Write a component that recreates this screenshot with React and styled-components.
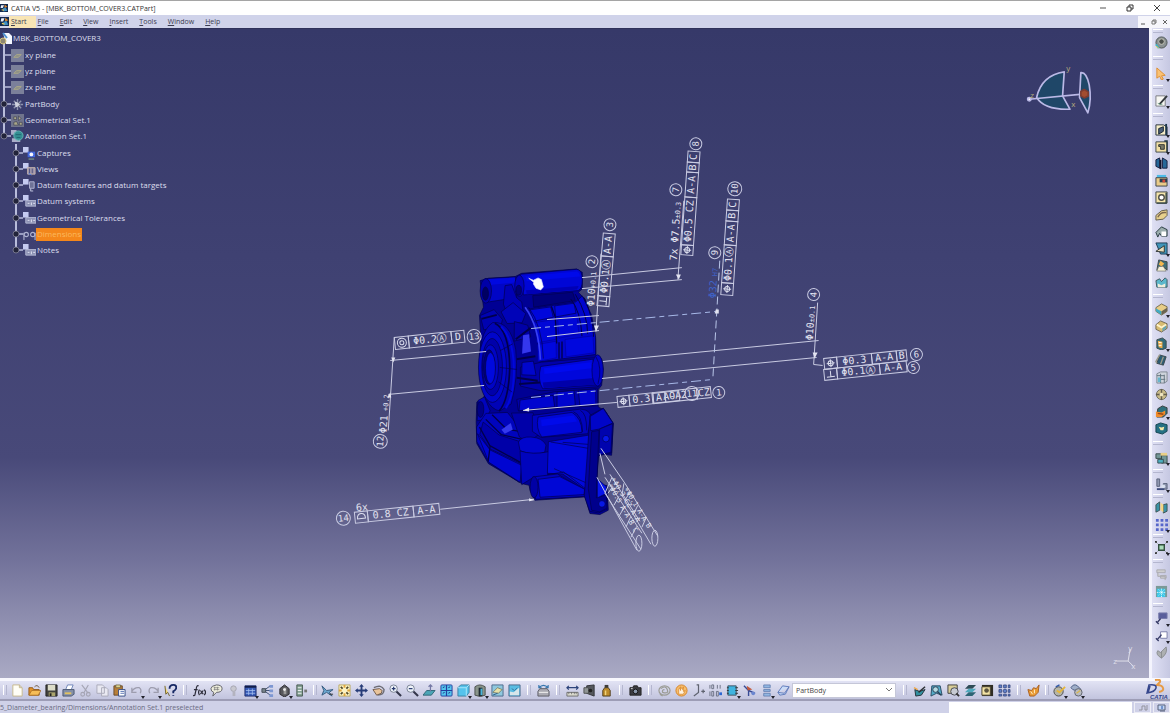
/** @format */

import React, {useState} from 'react'
import styled, {createGlobalStyle} from 'styled-components'

// 14x14 glyphs shared by both toolbars and the tree
const icons = {
  app: (
    <>
      <rect width="14" height="14" fill="#13294d" />
      <path d="M2 2h5l-2 5H1z" fill="#e8eef8" />
      <path d="M8 1l5 4-5 2z" fill="#e58a2c" />
      <path d="M5 8l5-2 3 6-7 1z" fill="#3e8fc4" />
      <path d="M3 10l4 1" stroke="#f4d35a" strokeWidth="2" />
    </>
  ),
  newFile: <path d="M2 1h7l3 3v9H2z M9 1v3h3" fill="#fffef6" stroke="#c7b98a" />,
  open: (
    <>
      <path d="M1 12V4h4l1 2h6v6z" fill="#e4932a" stroke="#8f5717" />
      <path d="M1 12l3-5h10l-3 5z" fill="#f6bd57" stroke="#9c6420" strokeWidth=".7" />
      <path d="M7 3q3-3 5 1" fill="none" stroke="#725c40" />
    </>
  ),
  save: (
    <>
      <path d="M1 1h12v12H1z" fill="#42423e" stroke="#222" />
      <path d="M3 1h8v6H3z" fill="#dcdcc9" />
      <path d="M4 9h7v4H4z" fill="#aaa46c" />
      <path d="M5 10h2v3H5z" fill="#222" />
    </>
  ),
  print: (
    <>
      <path d="M4 6l2-5h6l-2 5z" fill="#fff" stroke="#6b83b8" />
      <path d="M1 6h12v5l-3 2H1z" fill="#8490a8" stroke="#4a5570" />
      <path d="M3 10h7" stroke="#e3c260" strokeWidth="2" />
    </>
  ),
  cut: (
    <g fill="none" stroke="#a5a5b4" strokeWidth="1.2">
      <path d="M3 1l7 9M10 1L5 10" />
      <circle cx="4" cy="11" r="2" />
      <circle cx="10" cy="11" r="2" />
    </g>
  ),
  copy: <path d="M1 1h6l2 2v7H1zM6 4h5l2 2v7H6z" fill="#e9e9f2" stroke="#a9a9b8" />,
  paste: (
    <>
      <path d="M1 2h9v10H1z" fill="#b87f38" stroke="#68492b" />
      <path d="M3 1h5v3H3z" fill="#ddd28f" stroke="#5b5134" strokeWidth=".7" />
      <path d="M6 6h7v7H6z" fill="#fff" stroke="#334b85" />
      <path d="M8 8h4M8 10h4" stroke="#5470b2" />
    </>
  ),
  undo: <path d="M2 4v5h5M2 8q3-5 8-4 3 2 1 6" fill="none" stroke="#9d9dae" strokeWidth="1.4" />,
  redo: <path d="M12 4v5H7M12 8Q9 3 4 4q-3 2-1 6" fill="none" stroke="#9d9dae" strokeWidth="1.4" />,
  help: (
    <>
      <path d="M1 2l1 9 2-2 2 4" fill="#f3d873" stroke="#6b5e2a" />
      <path d="M6 5q0-4 4-4t3 4q-1 2-3 3v2M10 12v1" fill="none" stroke="#172964" strokeWidth="2" />
    </>
  ),
  formula: (
    <g fill="none" stroke="#2b2b38" strokeWidth="1.3">
      <path d="M6 2Q4 1 3.500 5L2 12q-1 1-2 0M1 6h4M7 6q-2 3 0 6M12 6q3 3 0 6M8 7l3 4M11 7l-3 4" />
    </g>
  ),
  comment: (
    <>
      <path d="M7 1q6 0 6 4t-6 4l-4 4 1-4Q1 8 1 5t6-4z" fill="#eeeedd" stroke="#5e5e66" />
      <path d="M5 3v4M8 3v4M4 4h6M4 6h6" stroke="#777" strokeWidth=".7" />
    </>
  ),
  lamp: (
    <>
      <circle cx="7" cy="5" r="3" fill="#c8c8cf" stroke="#a4a4b0" />
      <path d="M6 8h3v5H6z" fill="#b3b3bf" />
    </>
  ),
  table: (
    <>
      <path d="M1 2h12v11H1z" fill="#375bb7" stroke="#1f2e6e" />
      <path d="M1 3h12" stroke="#121d49" strokeWidth="2" />
      <path d="M2 7h10M2 10h10M5 5v7M9 5v7" stroke="#a9c4f2" strokeWidth=".8" />
    </>
  ),
  graph: (
    <>
      <path d="M3 7l7-5M3 7h7M3 7l7 5" stroke="#394b6e" />
      <path d="M1 5h4v4H1z" fill="#78848c" stroke="#434c55" />
      <path d="M9 1h4v3H9zM9 6h4v3H9zM9 11h4v3H9z" fill="#7d97d2" />
    </>
  ),
  lock: (
    <>
      <path d="M2 5l5-4 5 4v6l-5 3-5-3z" fill="#57575c" stroke="#29292d" />
      <path d="M6 4h3v7H6z" fill="#999" />
      <circle cx="7" cy="6" r="1.500" fill="#eee" />
    </>
  ),
  rules: (
    <>
      <path d="M2 1h6v12H2z" fill="#86a496" stroke="#45564f" />
      <path d="M3 4h4M3 7h4M3 10h4" stroke="#f3f3f3" />
      <path d="M10 6h3v3h-3z" fill="#777" />
    </>
  ),
  fly: (
    <>
      <path d="M1 2l5 5 7-1-4 3 3 4-6-4-5 3 2-5z" fill="#6ba7cf" stroke="#35597c" />
      <path d="M9 11h4" stroke="#333" />
    </>
  ),
  fitAll: (
    <>
      <path d="M1 1h12v12H1z" fill="#fbf3c4" stroke="#b9a862" />
      <path d="M3 3l2 2M11 3L9 5M3 11l2-2M11 11L9 9" stroke="#4c4526" strokeWidth="1.800" />
      <path d="M7 1v3M7 10v3M1 7h3M10 7h3" stroke="#e0a63c" strokeWidth="2" />
    </>
  ),
  pan: (
    <>
      <path d="M7 2v10M2 7h10" stroke="#273c78" strokeWidth="2" />
      <path d="M7 0l2.500 3h-5zM7 14l2.500-3h-5zM0 7l3-2.500v5zM14 7l-3-2.500v5z" fill="#273c78" />
    </>
  ),
  rotate: (
    <>
      <path d="M2 4q8-4 11 2 0 6-7 6" fill="none" stroke="#6c6c75" strokeWidth="1.500" />
      <path d="M1 6l7-1 3 2-1 3-5 2z" fill="#e9c49b" stroke="#6f5846" />
    </>
  ),
  zoomIn: (
    <>
      <circle cx="5" cy="5" r="4" fill="#eef3fa" stroke="#777f91" />
      <path d="M3 5h4M5 3v4" stroke="#26386e" strokeWidth="1.300" />
      <path d="M8 8l5 5" stroke="#33364a" strokeWidth="2.200" />
    </>
  ),
  zoomOut: (
    <>
      <circle cx="5" cy="5" r="4" fill="#eef3fa" stroke="#777f91" />
      <path d="M3 5h4" stroke="#26386e" strokeWidth="1.300" />
      <path d="M8 8l5 5" stroke="#33364a" strokeWidth="2.200" />
    </>
  ),
  normal: (
    <>
      <path d="M4 7h9l-4 5H0z" fill="#4ba5b6" stroke="#2f6675" />
      <path d="M8 8V1M6 3l2-2 2 2" fill="none" stroke="#7478a4" strokeWidth="1.300" />
    </>
  ),
  multi: (
    <>
      <rect x="1" y="1" width="12" height="12" rx="1" fill="#54c6ee" stroke="#233f9e" />
      <path d="M7 1v12M1 7h12" stroke="#233f9e" strokeWidth="1.300" />
      <path d="M3 4l2-1M9 4l2-1M3 10l2-1M9 10l2-1" stroke="#1b2e82" />
    </>
  ),
  cube: (
    <>
      <path d="M1 4l3-3h9v8l-3 4H1z" fill="#55c3ec" stroke="#3b7ea0" />
      <path d="M1 4h9v9M10 4l3-3" fill="none" stroke="#a9e6fa" />
    </>
  ),
  shading: (
    <>
      <path d="M1 3q5-4 11 0v9q-5 3-11 0z" fill="#89948a" stroke="#4a4e4c" />
      <path d="M5 4h4v9H5z" fill="#1f2b33" />
      <path d="M7 5h2v7H7z" fill="#49b4d8" />
    </>
  ),
  hide: (
    <>
      <path d="M1 1h12v12H1z" fill="#8fc8de" stroke="#4e6a8a" />
      <path d="M2 9l5-5 5 2-4 4z" fill="#e6e1aa" stroke="#66644a" strokeWidth=".7" />
      <path d="M2 12l5-2" stroke="#295886" />
    </>
  ),
  swap: (
    <>
      <path d="M1 1h12v12H1z" fill="#58bce2" stroke="#4e6a8a" />
      <path d="M2 12V8l4 1 6-5v8z" fill="#d7e6ea" />
      <path d="M4 5l3 2 3-3" fill="none" stroke="#3777a0" />
    </>
  ),
  printer: (
    <>
      <path d="M2 4q5-5 10 0M2 1v3h3M12 1v3H9" fill="none" stroke="#3575ad" strokeWidth="1.200" />
      <path d="M1 8l2-3h8l2 3v5H1z" fill="#aaaab2" stroke="#5a5a62" />
      <path d="M2 9h10" stroke="#f5f5f5" />
    </>
  ),
  measure: (
    <>
      <path d="M1 4h12M3 2L1 4l2 2M11 2l2 2-2 2" fill="none" stroke="#2c437a" strokeWidth="1.300" />
      <path d="M1 9h12v4H1z" fill="#dcdcd0" stroke="#6b6b6b" />
      <path d="M3 9v2M6 9v2M9 9v2M11 9v2" stroke="#555" strokeWidth=".7" />
    </>
  ),
  item: (
    <>
      <path d="M4 2l8-1v12l-8-3z" fill="#55585c" stroke="#303236" />
      <path d="M1 4h5v6H1z" fill="#8f9494" stroke="#4d5050" />
      <circle cx="8" cy="7" r="2" fill="#222" />
    </>
  ),
  inertia: (
    <>
      <path d="M5 4h4l2 3v6H3V7z" fill="#bc8b2b" stroke="#4d3c1c" />
      <path d="M5 1h4v3H5z" fill="#3e3b35" />
      <path d="M6 7v5" stroke="#f0d27a" strokeWidth="1.500" />
    </>
  ),
  camera: (
    <>
      <path d="M1 4h3l1-2h4l1 2h3v8H1z" fill="#3b3b40" stroke="#222" />
      <circle cx="7" cy="8" r="2.500" fill="#8b98ac" stroke="#111" />
      <path d="M2 5h2" stroke="#ddd" />
    </>
  ),
  spiral: (
    <g fill="none" stroke="#9b9c95" strokeWidth="1.300">
      <ellipse cx="7" cy="7" rx="6" ry="5" />
      <path d="M3 5q5-4 7 1t-5 3q-1-3 2-3M2 11l3 2" />
    </g>
  ),
  hand: (
    <>
      <circle cx="7" cy="7" r="6" fill="#f6bd6c" stroke="#d58224" />
      <path d="M4 11V6l1-2 1 3V3l2 3 1-3v5l2-1-2 4z" fill="#fff3df" stroke="#d47b18" strokeWidth=".7" />
    </>
  ),
  axis: (
    <>
      <path d="M5 1h2v8l-5 4M10 8h4M12 6v4" fill="none" stroke="#5f6370" strokeWidth="1.300" />
    </>
  ),
  numbers: (
    <>
      <path d="M1 1v4M3 1h2v4H3zM9 1v4M12 1v4M1 8v5M3 8h2v5H3zM8 8h2v5H8z" fill="none" stroke="#6a6f82" />
      <path d="M11 9h3v3h-3z" fill="#2c67d2" />
    </>
  ),
  block: (
    <>
      <path d="M2 2h9v10H2z" fill="#3fb3df" stroke="#3d5162" />
      <path d="M1 4h2M1 7h2M1 10h2M10 4h3M10 7h3M10 10h3" stroke="#333" />
    </>
  ),
  constraint: (
    <>
      <path d="M1 2l5 5M6 7v6M6 7l7 3" stroke="#374b96" strokeWidth="1.500" />
      <path d="M4 2l6 4-5 1z" fill="#c2583b" />
      <circle cx="11" cy="10" r="2" fill="#6b87d0" />
    </>
  ),
  stack: <path d="M4 1h7v3H4zM4 6h7v2H4zM4 10h7v3H4z" fill="#92b7e2" stroke="#5b77ab" strokeWidth=".8" />,
  eraser: <path d="M1 9l5-7 7 1-4 8-6 1zM1 9l7 1 5-7" fill="#c9dcf8" stroke="#5d78b9" />,
  sketch1: (
    <>
      <path d="M2 6l5 2 6-2-4 6-6 1z" fill="#3390a0" stroke="#222e36" />
      <path d="M13 3L6 9" stroke="#2d3033" strokeWidth="1.500" />
      <path d="M1 4l4 2" stroke="#f0a849" strokeWidth="1.500" />
    </>
  ),
  sketch2: (
    <>
      <path d="M2 2h9l2 10-6-2-6 3z" fill="#53aac6" stroke="#284860" />
      <circle cx="6" cy="6" r="3" fill="#b5dae1" stroke="#2b3f55" />
      <path d="M8 8l4 4" stroke="#2b3f55" strokeWidth="1.500" />
    </>
  ),
  sketch3: (
    <>
      <path d="M1 1h10v9H1z" fill="#d8cd98" stroke="#3c3c3c" />
      <circle cx="8" cy="8" r="4" fill="#c7cbd3" stroke="#44464f" />
      <path d="M10 10l3 3" stroke="#333" strokeWidth="2" />
    </>
  ),
  layers: (
    <>
      <path d="M5 1h8l-4 4H1z" fill="#2f4c57" />
      <path d="M5 5h8l-4 4H1z" fill="#4fa9bd" />
      <path d="M5 9h8l-4 4H1z" fill="#2c6474" />
    </>
  ),
  pocket: (
    <>
      <path d="M1 1h12v12H1z" fill="#2f2c24" />
      <path d="M1 3h9v9H1z" fill="#f3e3a4" stroke="#4a4431" />
      <circle cx="6" cy="7" r="2.500" fill="#5d5640" />
    </>
  ),
  pattern: (
    <g fill="#5f80c9" stroke="#27356c" strokeWidth=".7">
      <path d="M1 1h3v3H1zM6 1h3v3H6zM11 1h2v3h-2zM1 6h3v3H1zM11 6h2v3h-2zM1 11h3v2H1zM6 11h3v2H6zM11 11h2v2h-2z" />
      <circle cx="7.500" cy="7.500" r="2" />
    </g>
  ),
  tools: (
    <>
      <path d="M1 6l4 1 2-3 3 1 3-4-1 8-4 4H3z" fill="#e99b35" stroke="#a75d1c" />
      <path d="M4 8l2 3M8 6v4" stroke="#fff1ce" />
    </>
  ),
  wrench: (
    <>
      <circle cx="6" cy="8" r="5" fill="#b5b5a8" stroke="#4b4b4b" />
      <path d="M13 3L7 9l-3-2" fill="none" stroke="#e6b63c" strokeWidth="2" />
      <path d="M3 3l4-2" stroke="#2e57a8" strokeWidth="1.500" />
    </>
  ),
  views: (
    <>
      <path d="M1 4q3-5 7-2l3 3-2 3-6-2z" fill="#9faec8" stroke="#4b5c82" />
      <circle cx="9" cy="9" r="4" fill="#b9bcc4" stroke="#5d6068" />
      <path d="M7 10l4-3" stroke="#d9b650" strokeWidth="1.500" />
    </>
  ),
  gear: (
    <>
      <circle cx="7" cy="7" r="6" fill="#8a9192" stroke="#4c5352" />
      <circle cx="7" cy="6" r="3" fill="#4b504d" stroke="#c9c9bb" />
      <path d="M1 9l3 4" stroke="#42b4c9" strokeWidth="2" />
      <path d="M1 11l3 2" stroke="#eecb47" />
    </>
  ),
  select: <path d="M2 1l9 8-4 .5L9 13l-2 1-2-4-3 2z" fill="#fac274" stroke="#dd8e31" />,
  sketcher: (
    <>
      <path d="M1 2h10v11H1z" fill="#f7f7f3" stroke="#77797e" />
      <path d="M13 2L5 11" stroke="#33383d" strokeWidth="2" />
      <path d="M3 10q2 2 5 1" fill="none" stroke="#679a80" />
    </>
  ),
  pad: (
    <>
      <path d="M1 2h8l4 2v9H1z" fill="#f5edc8" stroke="#23303d" />
      <path d="M11 1h2v12h-2z" fill="#193348" />
      <path d="M4 6l5-2v5l-5 3z" fill="#4a5e7a" stroke="#14222e" />
    </>
  ),
  pocket2: (
    <>
      <path d="M1 2h12v11H1z" fill="#f2e0a5" stroke="#3d4548" />
      <path d="M4 5h6v5H6v-3H4z" fill="#7a7b68" stroke="#30332f" />
      <path d="M10 1h3v12" fill="none" stroke="#22363f" strokeWidth="1.500" />
    </>
  ),
  shaft: (
    <>
      <path d="M1 3l4-2v11l-4-2zM8 1l5 3v8H8z" fill="#256798" stroke="#161c3e" />
      <path d="M6 3v10" stroke="#10122c" strokeWidth="2" />
    </>
  ),
  groove: (
    <>
      <path d="M2 1h10v3H2z" fill="#4dbbe7" />
      <path d="M1 4h12v9H1z" fill="#e9cb89" stroke="#3a4248" />
      <path d="M5 5h8v4H5z" fill="#253e52" />
      <path d="M8 6h3v3H8z" fill="#cd4838" />
    </>
  ),
  hole: (
    <>
      <path d="M1 1h12v12H1z" fill="#f4e5ab" stroke="#3b4242" />
      <circle cx="7" cy="7" r="3" fill="#fff" stroke="#4e4e45" strokeWidth="1.500" />
      <path d="M12 2v11H2" fill="none" stroke="#2f4242" strokeWidth="1.500" />
    </>
  ),
  rib: (
    <>
      <path d="M1 8l6-5 6-1v6l-4 4-8 1z" fill="#e7d08d" stroke="#5f5a49" />
      <path d="M3 10q3-6 9-5" fill="none" stroke="#7d6950" strokeWidth="1.500" />
    </>
  ),
  slot: (
    <>
      <path d="M1 8l6-6 6 3v7H7L5 9l-2 4z" fill="#9badad" stroke="#23353c" />
      <path d="M7 7h5v5H7z" fill="#fff" />
    </>
  ),
  stiffener: (
    <>
      <path d="M1 1h12v12H6z" fill="#3f94b8" stroke="#1d3851" />
      <path d="M1 10l9-6v7z" fill="#e7ddbb" stroke="#2c312e" />
    </>
  ),
  loft: (
    <>
      <path d="M4 1l9 2v9l-5-5-6 5z" fill="#3e6f78" stroke="#3d4446" />
      <path d="M6 2l4 3-3 3-3-2z" fill="#f4b64f" />
      <path d="M2 13l2-5h5l3 5z" fill="#f3eed9" stroke="#6b6d66" strokeWidth=".7" />
    </>
  ),
  loft2: (
    <>
      <path d="M1 5l4-2 2 3 4-4 2 2v8H2z" fill="#5bb7cb" stroke="#3c555c" />
      <path d="M3 8l4 2 4-2v4H3z" fill="#f0ecd9" />
    </>
  ),
  fillet: (
    <>
      <path d="M1 5l6-4 6 3v5l-6 4-6-4z" fill="#e8cd86" stroke="#766a49" />
      <path d="M1 6l6 3v4l-6-4z" fill="#3faac4" />
      <path d="M7 9l6-4v4l-6 4z" fill="#696352" />
    </>
  ),
  chamfer: (
    <>
      <path d="M1 5l5-4 7 3v5l-6 4-6-3z" fill="#d8bc72" stroke="#6c6551" />
      <path d="M2 5l5 3 5-3" fill="none" stroke="#fff3ca" strokeWidth="2" />
      <path d="M8 9l4-3v3l-4 3z" fill="#65a6b5" />
    </>
  ),
  draft: (
    <>
      <path d="M2 3l6-2 4 3v8l-5 2-5-2z" fill="#346c7a" stroke="#3a494c" />
      <path d="M3 4l5 1v7l-4-1z" fill="#f2b04c" />
      <path d="M4 6h3M4 9h3" stroke="#fff" />
    </>
  ),
  shell: (
    <>
      <path d="M5 1l7 2-3 9-7-2z" fill="#2d5d73" stroke="#39454c" />
      <path d="M5 1l-4 7 1 2M9 3L6 11" fill="none" stroke="#9b998a" strokeWidth="1.500" />
    </>
  ),
  thick: (
    <>
      <path d="M2 3l4-2h7v10l-3 2H2z" fill="#ced4dc" stroke="#7e8791" />
      <path d="M6 3v10M2 5h8M6 9h5M10 4v9" stroke="#61717c" />
      <path d="M3 7h3v5H3z" fill="#67b6cd" />
    </>
  ),
  thread: (
    <>
      <circle cx="7" cy="7" r="5.500" fill="#c9bb88" stroke="#6c6a5b" />
      <path d="M7 1v12M1 7h12" stroke="#645e4d" strokeWidth="1.500" />
      <circle cx="7" cy="7" r="2" fill="#eee4bf" />
    </>
  ),
  face: (
    <>
      <path d="M3 4l5-3 5 2v6l-4 4H2z" fill="#2d6f7c" stroke="#363b3b" />
      <path d="M1 7l6 1 4-2v4l-4 3H1z" fill="#f18c29" />
      <path d="M3 9l6 1" stroke="#9a4616" strokeWidth="1.500" />
    </>
  ),
  replace: (
    <>
      <path d="M1 3l5-2 7 2v7l-5 3-7-2z" fill="#247083" stroke="#15434f" />
      <path d="M4 5l3 1 3-1-1 4H6z" fill="#f4e9a9" />
    </>
  ),
  assemble: (
    <>
      <path d="M1 3h6v5H1zM7 5h6v8H7z" fill="#739797" stroke="#394c4c" />
      <path d="M3 9h6v4H3z" fill="#4baebf" stroke="#364c50" />
      <path d="M6 2h7v3H6z" fill="#e9cf87" />
    </>
  ),
  translate: (
    <>
      <path d="M2 1h3v8H2zM9 6h4v6H9z" fill="#9098b1" stroke="#576079" />
      <path d="M2 12h8" stroke="#3b4979" strokeWidth="2" />
      <circle cx="9" cy="9" r="2" fill="#d9e1ef" />
    </>
  ),
  mirror: (
    <>
      <path d="M1 4l4-3v9l-4 2zM9 4l4-1v8l-4 2z" fill="#3993a7" stroke="#3e5252" />
      <path d="M6 2l3 2v8l-3-2z" fill="#f2d685" />
    </>
  ),
  grid: (
    <g fill="#5666ca">
      <path d="M1 1h3v3H1zM6 1h3v3H6zM11 1h3v3h-3zM1 6h3v3H1zM6 6h3v3H6zM11 6h3v3h-3zM1 11h3v3H1zM6 11h3v3H6zM11 11h3v3h-3z" />
    </g>
  ),
  scale: (
    <>
      <path d="M1 1l12 12M13 1L1 13" stroke="#626b66" strokeDasharray="2 1" />
      <path d="M4 4h6v6H4z" fill="#a9dcb8" stroke="#304d3c" strokeWidth="1.500" />
      <path d="M0 0h2v2H0zM12 0h2v2h-2zM0 12h2v2H0zM12 12h2v2h-2z" fill="#333" />
    </>
  ),
  dim: <path d="M2 2h9v3H2zM3 5v4h8v4M6 8h6v3H6z" fill="#cecece" stroke="#aaaab0" />,
  mesh: (
    <>
      <path d="M1 1h12v12H1z" fill="#7c9997" />
      <path d="M2 4h9v9H2z" fill="#3ec7e7" />
      <path d="M4 5l6 6M10 5l-6 6M7 4v9M2 8h9" stroke="#fff" strokeDasharray="1 1" />
    </>
  ),
  flag: (
    <>
      <path d="M4 1h9v6H4z" fill="#595e9b" stroke="#777bac" />
      <path d="M2 12l4-5M1 10l3 3" stroke="#383c67" strokeWidth="1.500" />
    </>
  ),
  note: (
    <>
      <path d="M6 3h7v7H6z" fill="#fff" stroke="#777ba7" />
      <path d="M2 12l5-6M1 10l3 3" stroke="#383c67" strokeWidth="1.500" />
    </>
  ),
  leaf: <path d="M12 1q2 7-5 12Q0 9 3 5l3 2zM7 13V6" fill="#adb0b1" stroke="#898d90" />,
  plane: (
    <>
      <path d="M0 0h14v14H0z" fill="#7b809a" />
      <path d="M3 9l3-3h5l-3 3z" fill="#8f9189" stroke="#b3af86" strokeWidth=".8" />
    </>
  ),
  body: (
    <>
      <path d="M7 1v12M1 7h12M3 3l8 8M11 3l-8 8" stroke="#8e94b0" strokeWidth="1.500" />
      <path d="M4 4l5 1 1 4-5 1z" fill="#cfd2e0" />
      <path d="M7 4l3 3-3 3" fill="none" stroke="#53566e" />
    </>
  ),
  geoSet: (
    <>
      <path d="M0 0h14v14H0z" fill="#70748c" />
      <path d="M3 3h3v3H3zM8 2l3 3-3 2zM3 9l3-1 2 4H3zM9 9h3v3H9z" fill="#aaa789" stroke="#3b3d52" strokeWidth=".7" />
    </>
  ),
  annotSet: (
    <>
      <path d="M0 0h6v5H0zM1 9h9v4H1z" fill="#a9adc8" />
      <circle cx="8" cy="6" r="5" fill="#348f93" stroke="#66b5b4" />
      <path d="M5 5h6M6 8h4" stroke="#1f656f" />
    </>
  ),
  captures: (
    <>
      <path d="M0 0h6v6H0z" fill="#c5cbf1" />
      <path d="M5 5h8v6H5z" fill="#4267dc" />
      <circle cx="9" cy="8" r="2" fill="#f5f5ff" />
      <path d="M6 13h6" stroke="#8fbb98" />
    </>
  ),
  viewSet: (
    <>
      <path d="M0 0h6v6H0z" fill="#c5cbf1" />
      <path d="M5 5h8v7H5z" fill="#9c93a9" stroke="#c9b4ae" />
      <path d="M7 6v5M10 6v5" stroke="#525480" />
      <path d="M6 11l3 2" stroke="#4e7fe8" />
    </>
  ),
  datum: (
    <>
      <path d="M0 0h6v6H0z" fill="#c5cbf1" />
      <path d="M7 3h5v7H7zM8 10v3h3" fill="#6f7397" stroke="#b2b6d4" />
    </>
  ),
  datumSys: (
    <>
      <path d="M0 0h6v6H0z" fill="#c5cbf1" />
      <path d="M3 6h11v6H3z" fill="#8d92b4" stroke="#b7bbd6" />
      <path d="M5 9h2M9 8v3M11 9h2" stroke="#e6e8f5" />
    </>
  ),
  pq: (
    <g fill="none" stroke="#aeb2d0" strokeWidth="1.200">
      <path d="M1 5v8M13 5v8" />
      <circle cx="3.500" cy="7" r="2.300" />
      <circle cx="10.500" cy="7" r="2.300" />
    </g>
  ),
}

const mainTools = [
  ['newFile', 'open', 'save', 'print', 'cut', 'copy', 'paste', 'undo+', 'redo+', 'help'],
  ['formula', 'comment', 'lamp', 'table+', 'graph', 'lock+', 'rules'],
  ['fly', 'fitAll', 'pan', 'rotate', 'zoomIn', 'zoomOut', 'normal', 'multi', 'cube+', 'shading+', 'hide', 'swap'],
  ['printer'],
  ['measure', 'item', 'inertia'],
  ['camera'],
  ['spiral', 'hand', 'axis', 'numbers', 'block+', 'constraint', 'stack+', 'eraser'],
]

const sketchTools = [
  ['sketch1', 'sketch2', 'sketch3', 'layers', 'pocket', 'pattern'],
  ['tools'],
  ['wrench+', 'views+'],
]

const partTools = [
  {space: 6, items: ['gear']},
  {space: 14, items: ['select+']},
  {space: 10, items: ['sketcher+']},
  {
    space: 12,
    items: ['pad+', 'pocket2+', 'shaft', 'groove', 'hole', 'rib', 'slot', 'stiffener+', 'loft', 'loft2'],
  },
  {space: 10, items: ['fillet+', 'chamfer', 'draft+', 'shell', 'thick', 'thread', 'face+', 'replace']},
  {space: 12, items: ['assemble+']},
  {space: 10, items: ['translate+']},
  {space: 6, items: ['mirror', 'grid+']},
  {space: 6, items: ['scale+']},
  {space: 10, items: ['dim', 'mesh']},
  {space: 10, items: ['flag+', 'note+', 'leaf']},
]

const menus = ['Start', 'File', 'Edit', 'View', 'Insert', 'Tools', 'Window', 'Help']

const planes = [
  {label: 'xy plane', icon: 'plane'},
  {label: 'yz plane', icon: 'plane'},
  {label: 'zx plane', icon: 'plane'},
]

const sets = [
  {label: 'PartBody', icon: 'body', knob: true},
  {label: 'Geometrical Set.1', icon: 'geoSet', knob: true},
  {label: 'Annotation Set.1', icon: 'annotSet', knob: true, last: true},
]

const annotations = [
  {label: 'Captures', icon: 'captures', knob: true},
  {label: 'Views', icon: 'viewSet', knob: true},
  {label: 'Datum features and datum targets', icon: 'datum', knob: true},
  {label: 'Datum systems', icon: 'datumSys', knob: true},
]

const tolerances = [
  {label: 'Geometrical Tolerances', icon: 'datumSys', knob: true},
  {label: 'Dimensions', icon: 'pq', knob: true},
  {label: 'Notes', icon: 'datumSys', knob: true, last: true},
]

const symbols = ['position', 'perp', 'concentric', 'profile']

function Icon({name, size = 14}) {
  return (
    <svg width={size} height={size} viewBox="0 0 14 14" aria-hidden="true">
      {icons[name]}
    </svg>
  )
}

function Tool({id}) {
  const more = id.endsWith('+')
  const name = more ? id.slice(0, -1) : id
  return (
    <StyledTool type="button" aria-label={name} $more={more}>
      <Icon name={name} />
    </StyledTool>
  )
}

function TreeNode({node, selected, onSelect}) {
  return (
    <StyledNode>
      <svg width="11" height="16" overflow="visible" aria-hidden="true">
        <path d={node.last ? 'M4-1v10' : 'M4-1v18'} stroke="#b9bddb" strokeWidth="2" />
        <path d="M4 8h7" stroke="#b9bddb" strokeWidth="1.500" />
        {node.knob && <circle cx="4" cy="8" r="3" fill="#22243a" stroke="#85859a" strokeWidth=".8" />}
      </svg>
      <Icon name={node.icon} size={13} />
      <StyledNodeLabel type="button" $selected={selected === node.label} onClick={() => onSelect(node.label)}>
        {node.label}
      </StyledNodeLabel>
    </StyledNode>
  )
}

function Bubble({x, y, angle, r = 7, children}) {
  return (
    <g transform={`translate(${x} ${y}) rotate(${angle})`}>
      <circle r={r} fill="none" stroke="#c9cbe2" />
      <text y="3" fontSize="9" textAnchor="middle">
        {children}
      </text>
    </g>
  )
}

// a row of boxed cells, each one [width, text] or [width, symbol name]
function Frame({x, y, angle, h = 12, cells}) {
  let left = 0
  return (
    <g transform={`translate(${x} ${y}) rotate(${angle})`}>
      {cells.map(([w, text], i) => {
        const start = left
        const mid = start + w / 2
        left += w
        return (
          <g key={i}>
            <rect x={start} y="0" width={w} height={h} fill="none" stroke="#c9cbe2" />
            {text === 'position' && (
              <g fill="none" stroke="#dcdeee">
                <circle cx={mid} cy={h / 2} r="2.500" />
                <path d={`M${mid - 4} ${h / 2}h8M${mid} ${h / 2 - 4}v8`} />
              </g>
            )}
            {text === 'perp' && (
              <path d={`M${mid - 4} ${h - 3}h8M${mid} ${h - 3}V2`} fill="none" stroke="#dcdeee" />
            )}
            {text === 'concentric' && (
              <g fill="none" stroke="#dcdeee">
                <circle cx={mid} cy={h / 2} r="4.500" />
                <circle cx={mid} cy={h / 2} r="2" />
              </g>
            )}
            {text === 'profile' && (
              <path d={`M${mid - 4} ${h - 4}q0-5 4-5t4 5z`} fill="none" stroke="#dcdeee" />
            )}
            {!symbols.includes(text) && (
              <text x={mid} y={h / 2 + 3} textAnchor="middle">
                {text}
              </text>
            )}
          </g>
        )
      })}
    </g>
  )
}

function Dimension({x, y, angle, value, tolerance, color}) {
  return (
    <text transform={`translate(${x} ${y}) rotate(${angle})`} fill={color}>
      {value}
      <tspan fontSize="7">{tolerance}</tspan>
    </text>
  )
}

function Housing() {
  return (
    <g transform="translate(450 250) scale(.3333)" stroke="#00004a" strokeWidth="2" strokeLinejoin="round">
      <path
        d="M90 90l25-7 80-5 20-10 165-13 17 10v50l-12 10 20 20 20 60 12 60 1 50 17 10 5 30-5 50-10 12v53l20 10 25 40-5 95-40-5-5 75 30 30 5 65-25 13-30-3-15-50-150 10-15-30-3-15-22-5-100-60-35-60-2-65 2-60 20-12 5-13-17-75 4-90-4-70 12-25z"
        fill="#000094"
      />
      {/* upper bosses */}
      <path d="M105 84l90-5 5 62-90 14z" fill="#0005c6" />
      <path d="M115 86l80-5 1 15-78 7z" fill="#0008e0" stroke="none" />
      <ellipse cx="107" cy="121" rx="17" ry="37" fill="#0000a8" />
      <ellipse cx="106" cy="129" rx="9" ry="20" fill="#000062" />
      <path d="M165 105l20-3 15 40 15 12 5 35-45 10-15-38z" fill="#0000b5" />
      <path d="M210 71l170-15q17 1 17 32 0 27-12 32l-165 13z" fill="#0006d6" />
      <path d="M226 76l155-13q9 5 9 15l-160 13z" fill="#0009ea" stroke="none" />
      <path d="M228 119l158-13-5 11-151 15z" fill="#0000b4" stroke="none" />
      <ellipse cx="208" cy="106" rx="14" ry="32" fill="#0000bd" />
      <ellipse cx="206" cy="119" rx="8" ry="15" fill="#000078" />
      <path d="M248 135l120-10 8 25-125 20z" fill="#000079" />
      {/* main barrel */}
      <path d="M232 176l145-22 20-18 28 58 12 66v52l-170 22q3-92-35-158z" fill="#0005ce" />
      <path d="M238 178l64-9 8 31-58 12zM314 166l58-8 6 30-61 11z" fill="#0007dc" />
      <path d="M254 216l61-9 5 59-59 11zM323 207l58-9 6 52-60 13z" fill="#0006d8" stroke="#0000a0" />
      <path d="M263 282l55-10 1 50-55 11zM345 267l84-11 3 51-84 12z" fill="#0007de" stroke="#0000a0" />
      <path d="M362 145q30 36 34 112M376 131q37 61 37 119M402 141q27 55 29 118" fill="none" strokeWidth="3" />
      <path d="M304 167l12 33 4 79M327 275v50M336 273v51" fill="none" strokeWidth="4" />
      <path d="M225 170q42 57 46 158" fill="none" stroke="#3740f4" strokeWidth="5" />
      <path d="M235 169q42 57 45 155" fill="none" />
      <path d="M211 350l63-15 168-14q18 38 5 88l-174 12-62-14z" fill="#0000aa" />
      <path d="M272 348l157-22 11 77-162 12q-16-26-6-67z" fill="#0007dc" />
      <path d="M282 353l140-18 3 18-142 18z" fill="#000aef" stroke="none" />
      <path d="M278 396l155-13 4 20-156 10z" fill="#0000aa" stroke="none" />
      <ellipse cx="443" cy="360" rx="17" ry="47" fill="#0002c7" />
      <path d="M438 319q20 32 6 82" fill="none" />
      <path d="M200 447l114-23 129-9v51l-121 7-117 9z" fill="#0000aa" />
      <path d="M210 449l99-14 5 34-107 12zM321 425l51-5 4 44-55 9zM385 420l52-4 1 48-48 4z" fill="#0005cf" />
      {/* ribs between the flange and the barrel */}
      <path d="M153 184l36-28 38 33-11 28-45 2z" fill="#0003b8" />
      <path d="M193 213l40 11 9 35-50 13z" fill="#0000a7" />
      <path d="M197 266l45-34M199 326l57-9M200 382l63 9M207 401l63-5" fill="none" strokeWidth="6" />
      <path d="M219 254l18-3 6 52-27 7z" fill="#3437ed" stroke="none" />
      <path d="M216 336l34-4 8 43-43-2z" fill="#0006cc" />
      <path d="M90 195l42-18 25 30-5 22-51 9z" fill="#0002b1" />
      <path d="M94 205l46-12" fill="none" strokeWidth="6" />
      {/* bearing flange */}
      <path d="M128 216q53-5 69 82 9 81-14 163l-34 21Q99 471 89 367q-7-122 39-151z" fill="#0003b7" />
      <path d="M134 218q43 20 45 133-3 99-32 131" fill="none" strokeWidth="5" />
      <path d="M153 228q43 44 38 154-4 64-24 91" fill="none" stroke="#0008dc" strokeWidth="6" />
      <ellipse cx="127" cy="350" rx="42" ry="106" fill="#0005ca" />
      <ellipse cx="126" cy="350" rx="31" ry="86" fill="#0000aa" />
      <ellipse cx="121" cy="350" rx="24" ry="67" fill="#0004c4" />
      <ellipse cx="117" cy="350" rx="17" ry="52" fill="#000079" />
      <ellipse cx="121" cy="353" rx="15" ry="47" fill="#0009de" />
      <path d="M149 351l52 6M145 394l41 31M151 300l37-20" fill="none" />
      {/* lower casing */}
      <path d="M84 450l19-11 17 42-14 27-25 3z" fill="#0004bd" />
      <ellipse cx="91" cy="477" rx="10" ry="24" fill="#000084" />
      <path d="M79 530l28-41 65-3 45 57-10 153-93-62-34-60z" fill="#0004bd" />
      <path d="M82 550l38 49 95 46-5 51-94-60z" fill="#0005d1" />
      <path d="M99 515l48 39 70 22-2 65-97-46-29-43z" fill="#0000a8" />
      <path d="M107 507l47 46 79 18M126 493l43 43 61 11M88 530l31 56 92 50M120 587l-6 46" fill="none" strokeWidth="4" />
      <path d="M154 538l28-20 6 20-24 12z" fill="#3439ec" stroke="none" />
      <path d="M184 488l65-1 20 63-34 26-27-16z" fill="#0000a9" />
      <path d="M205 575q9-17 38-15 34 2 45 24l-4 22q-35 12-74-5z" fill="#0005cc" />
      <path d="M210 602q38 12 86 2l-3 73-46 6-32 20z" fill="#0004bd" />
      <path d="M247 495l145-19q32 3 30 26l-8 48-141 11-26-18z" fill="#0003bc" />
      <path d="M264 500l102-14q29 16 30 60l-121 14q-18-25-11-60z" fill="#0007d6" />
      <path d="M273 508l98-13 10 18-106 15z" fill="#000aeb" stroke="none" />
      <path d="M370 484q26 9 28 61M391 480q20 9 19 60" fill="none" />
      <path d="M295 574l123-20-2 171-78-54-46-2z" fill="#0008db" />
      <path d="M302 575l113 19M338 576l76 6M293 673l48-8 76 58M312 655l102 45" fill="none" />
      <path d="M248 680l74-9 92 55-4 12-152 9-17-28z" fill="#0003bd" />
      <path d="M264 687l65-8 75 38-2 16-132 8z" fill="#0007d6" />
      <ellipse cx="252" cy="711" rx="12" ry="32" fill="#0000a5" />
      {/* mounting ear */}
      <path d="M420 495l40-22 30 45-5 90-39 8-7 85 32 5 3 70-29 12-26-5-16-46 8-112z" fill="#0000a0" />
      <path d="M421 498l39-24 29 44-41 18-26 5z" fill="#0005c8" />
      <path d="M449 536l39-16-5 86-36 8z" fill="#0003ae" />
      <path d="M425 544l22-4-8 203 30-9 2 40-22 11-24-5-10-64z" fill="#00008c" />
      <path d="M442 685l27 24 1 20-28 14z" fill="#0714eb" />
      <circle cx="468" cy="565" r="10" fill="#0717e6" />
      <circle cx="456" cy="761" r="10" fill="#0717e6" />
      <path d="M236 83l14 6 14-7 10 5 6 22-8 9-14-5-8-13 1-5z" fill="#fff" stroke="#e0e0ff" />
    </g>
  )
}

function Annotations() {
  return (
    <g
      fill="#e2e3f0"
      fontFamily='"DejaVu Sans Mono", "Liberation Mono", monospace'
      fontSize="10"
    >
      <g fill="none" stroke="#c9cbe2">
        <path d="M582 277l100-10M582 288l100-9M678 279l6-79M596 331l5-78M547 319l52-4M547 336l52-6" />
        <path d="M603 361l216-21M602 378l215-21M818 302l-4 62 9 1" />
        <path d="M390 360l96-9M388 394l96-9M394 337l-6 93M440 509l94-10M523 410l94-8" />
        <path d="M531 328l185-17M531 397l182-18" stroke="#a8b9e8" strokeDasharray="10 4 5 4" />
        <path d="M720 260l-7 119" stroke="#b9c6e9" strokeDasharray="8 4" />
        <path d="M601 448l24 35 33 53M600 453l5 21M597 477l40 73M605 477l37 56M610 474l30 47M624 483l-2 12 29 49M605 493l36 56M612 477l-7 16" />
        <path d="M613 486l-5 7M619 496l-5 9M625 506l-6 10M631 516l-5 11M637 526l-6 11M630 492l-5 8M638 505l-4 8M646 518l-4 9" />
        <ellipse cx="639" cy="543" rx="3" ry="8" />
        <ellipse cx="655" cy="538" rx="3" ry="8" />
      </g>
      <path d="M523 410l6-3v4zM534 500l-5-2v3zM679 279l-3-5h5zM815 358l-2-6h5zM393 362l-2-5h4zM390 392l-3 5h4zM716 309h3v4h-4zM596 331l-2-6h5z" />
      <Frame x={394} y={337} angle={-6} cells={[[14, 'concentric'], [43, 'Φ0.2Ⓐ'], [13, 'D']]} />
      <Bubble x={474} y={336} angle={-6}>13</Bubble>
      <Dimension x={386} y={433} angle={-86} value="Φ21" tolerance=" +0.2" />
      <Bubble x={380} y={441} angle={-86}>12</Bubble>

      <text transform="translate(356 511) rotate(-6)">6x</text>
      <Frame x={354} y={512} angle={-6} h={11} cells={[[13, 'profile'], [46, '0.8 CZ'], [26, 'A-A']]} />
      <Bubble x={343} y={518} angle={-6}>14</Bubble>

      <Dimension x={594} y={306} angle={-86} value="Φ10" tolerance="+0.1" />
      <Bubble x={592} y={261} angle={-86} r={6}>2</Bubble>
      <Frame x={597} y={305} angle={-85} cells={[[10, 'perp'], [40, 'Φ0.1Ⓐ'], [23, 'A-A']]} />
      <Bubble x={610} y={224} angle={-86} r={6}>3</Bubble>

      <Dimension x={677} y={260} angle={-86} value="7x Φ7.5" tolerance="±0.3" />
      <Bubble x={676} y={189} angle={-86} r={6}>7</Bubble>
      <Frame
        x={681}
        y={254}
        angle={-86}
        cells={[[10, 'position'], [48, 'Φ0.5 CZ'], [25, 'A-A'], [10, 'B'], [11, 'C']]}
      />
      <Bubble x={696} y={143} angle={-86} r={6}>8</Bubble>

      <Dimension x={716} y={298} angle={-86} value="Φ32" tolerance=" H7" color="#3f63c9" />
      <Bubble x={715} y={252} angle={-86} r={6}>9</Bubble>
      <Frame
        x={721}
        y={294}
        angle={-86}
        cells={[[12, 'position'], [38, 'Φ0.1Ⓐ'], [24, 'A-A'], [11, 'B'], [11, 'C']]}
      />
      <Bubble x={735} y={188} angle={-86}>10</Bubble>

      <Dimension x={813} y={340} angle={-86} value="Φ10" tolerance="±0.1" />
      <Bubble x={814} y={294} angle={-86} r={6}>4</Bubble>
      <Frame
        x={824}
        y={358}
        angle={-6}
        h={11}
        cells={[[13, 'position'], [35, 'Φ0.3'], [25, 'A-A'], [10, 'B']]}
      />
      <Bubble x={917} y={354} angle={-6} r={6}>6</Bubble>
      <Frame x={824} y={369} angle={-6} h={11} cells={[[13, 'perp'], [43, 'Φ0.1Ⓐ'], [27, 'A-A']]} />
      <Bubble x={914} y={367} angle={-6} r={6}>5</Bubble>

      <Frame x={617} y={396} angle={-6} h={11} cells={[[12, 'position'], [24, '0.3'], [44, 'A-A2'], [14, 'CZ']]} />
      <Frame x={652} y={393} angle={-6} h={10} cells={[[13, 'A'], [14, 'O']]} />
      <Bubble x={692} y={393} angle={-6}>11</Bubble>
      <Bubble x={719} y={392} angle={-6} r={6}>1</Bubble>

      <g fontSize="7">
        <text transform="translate(608 485) rotate(61)">⌖Φ0.5 A-A B C</text>
        <text transform="translate(611 479) rotate(59)">⌖Φ0.3 CZ A-A</text>
        <text transform="translate(624 489) rotate(59)">⌖Φ0.1 A-A B</text>
      </g>
    </g>
  )
}

function Compass() {
  return (
    <>
      <g transform="translate(1010 0) scale(.3333)" stroke="#bbb9e6" strokeWidth="5" strokeLinejoin="round">
        <path d="M165 213q-68 10-83 77 24 38 100 35l-22-40z" fill="#1f4768" />
        <path d="M215 215q17-2 25 37 8 45-4 84l-25-46z" fill="#1f4768" />
        <path d="M60 295l175-17" />
        <circle cx="60" cy="295" r="5" fill="#fff" />
        <path d="M215 272l10-6 12 7v12l-12 6-10-6z" fill="#a34d2f" stroke="#7d3b2f" />
      </g>
      <g fill="#b3ab7d" fontFamily='"Open Sans", sans-serif' fontSize="8">
        <text x="1067" y="70">y</text>
        <text x="1031" y="97">z</text>
        <text x="1072" y="106">x</text>
      </g>
      <g fill="#dfdfea" fontFamily='"Open Sans", sans-serif' fontSize="8">
        <path d="M1129 661l2-12M1129 661h-12M1129 661l5 5" fill="none" stroke="#dfdfea" />
        <text x="1129" y="651">y</text>
        <text x="1114" y="664">z</text>
        <text x="1132" y="669">x</text>
      </g>
    </>
  )
}

function SpecTree() {
  const [selected, setSelected] = useState('Dimensions')
  const render = node => (
    <TreeNode key={node.label} node={node} selected={selected} onSelect={setSelected} />
  )

  return (
    <StyledTree aria-label="Specification tree">
      <StyledRoot>
        <svg width="12" height="16" aria-hidden="true">
          <path d="M4 10v6" stroke="#b9bddb" strokeWidth="2" />
          <path d="M3 3h6l3 3v8H6z" fill="#f5f8ff" />
          <path d="M3 3l4 5" stroke="#4d8fcf" strokeWidth="2" />
          <circle cx="3" cy="11" r="3" fill="#8e8873" stroke="#d5c37c" />
        </svg>
        <StyledNodeLabel type="button">MBK_BOTTOM_COVER3</StyledNodeLabel>
      </StyledRoot>
      <StyledBranch>{planes.map(render)}</StyledBranch>
      <StyledBranch>{sets.map(render)}</StyledBranch>
      <StyledBranch $nested>{annotations.map(render)}</StyledBranch>
      <StyledBranch $nested>{tolerances.map(render)}</StyledBranch>
    </StyledTree>
  )
}

function ToolGroups({groups}) {
  return groups.map((group, i) => (
    <React.Fragment key={i}>
      {i > 0 && <StyledGrip $narrow={i === 2} />}
      {group.map(id => (
        <Tool key={id} id={id} />
      ))}
    </React.Fragment>
  ))
}

export default function App() {
  return (
    <StyledApp>
      <GlobalStyle />
      <StyledTitleBar>
        <Icon name="app" size={8} />
        <StyledTitle>CATIA V5 - [MBK_BOTTOM_COVER3.CATPart]</StyledTitle>
        <StyledWindowButton type="button" aria-label="Minimize">
          <svg width="8" height="8"><path d="M1 4h6" stroke="#555" /></svg>
        </StyledWindowButton>
        <StyledWindowButton type="button" aria-label="Restore">
          <svg width="8" height="8"><path d="M1 3h4v4H1zM3 3V1h4v4H5" fill="none" stroke="#333" /></svg>
        </StyledWindowButton>
        <StyledWindowButton type="button" aria-label="Close">
          <svg width="8" height="8"><path d="M1 1l6 6M7 1L1 7" stroke="#444" /></svg>
        </StyledWindowButton>
      </StyledTitleBar>

      <StyledMenuBar>
        <Icon name="app" size={9} />
        {menus.map((menu, i) => (
          <StyledMenu key={menu} type="button" $active={i === 0}>
            <u>{menu[0]}</u>
            {menu.slice(1)}
          </StyledMenu>
        ))}
        <StyledDocButtons>
          <button type="button" aria-label="Minimize document">
            <svg width="6" height="6"><path d="M1 5h4" stroke="#555" /></svg>
          </button>
          <button type="button" aria-label="Restore document">
            <svg width="6" height="6"><path d="M1 2h3v3H1zM2 2V1h3v3H4" fill="none" stroke="#777" /></svg>
          </button>
          <button type="button" aria-label="Close document">
            <svg width="6" height="6"><path d="M1 1l4 4M5 1L1 5" stroke="#666" /></svg>
          </button>
        </StyledDocButtons>
      </StyledMenuBar>

      <StyledWorkspace>
        <StyledViewport>
          <StyledScene viewBox="0 28 1149 650" role="img" aria-label="MBK_BOTTOM_COVER3">
            <Housing />
            <Annotations />
            <Compass />
          </StyledScene>
          <SpecTree />
        </StyledViewport>
        <StyledSideBar>
          {partTools.map(({space, items}) => (
            <React.Fragment key={items[0]}>
              <StyledSideGrip $space={space} />
              {items.map(id => (
                <Tool key={id} id={id} />
              ))}
            </React.Fragment>
          ))}
        </StyledSideBar>
      </StyledWorkspace>

      <StyledToolBar>
        <StyledGrip $narrow />
        <ToolGroups groups={mainTools} />
        <StyledSelectBox>
          <select aria-label="Body" defaultValue="PartBody">
            <option>PartBody</option>
          </select>
          <svg width="6" height="4" aria-hidden="true"><path d="M0 0l3 3 3-3" fill="none" stroke="#777" /></svg>
        </StyledSelectBox>
        <StyledGrip />
        <ToolGroups groups={sketchTools} />
        <StyledLogo width="25" height="22" viewBox="0 0 25 22">
          <path d="M10 1q6-1 5 2l-3 3q5 0 6 3t-4 4" fill="none" stroke="#e79b45" strokeWidth="2" />
          <path d="M4 6q8-1 7 3-1 4-9 5zM5 7L3 14" fill="none" stroke="#35468c" strokeWidth="1.500" />
          <text x="5" y="20">CATIA</text>
        </StyledLogo>
      </StyledToolBar>

      <StyledStatusBar>
        <StyledStatusText>5_Diameter_bearing/Dimensions/Annotation Set.1 preselected</StyledStatusText>
        <StyledCommand type="text" aria-label="Power input" />
        <StyledStatusButton type="button" aria-label="Command history">
          <svg width="10" height="8"><path d="M1 6h3V2h3v4h2V1" fill="none" stroke="#93939d" /></svg>
        </StyledStatusButton>
        <StyledStatusButton type="button" aria-label="Messages">
          <svg width="10" height="8">
            <path d="M1 1h7v5H1zM3 7h5" fill="#c3d6f4" stroke="#59627c" />
            <path d="M5 2v3" stroke="#2353a8" />
          </svg>
        </StyledStatusButton>
      </StyledStatusBar>
    </StyledApp>
  )
}

//styled-components

const GlobalStyle = createGlobalStyle`
  * {
    box-sizing: border-box;
  }
  body {
    margin: 0;
    font-family: "Open Sans", "Noto Sans", sans-serif;
    font-size: 8px;
  }
  button, select, input {
    margin: 0;
    padding: 0;
    border: 0;
    background: none;
    font: inherit;
    color: inherit;
  }
  svg {
    display: block;
    flex: none;
  }
`

const StyledApp = styled.div`
  display: flex;
  flex-direction: column;
  height: 100vh;
  overflow: hidden;
  background: #cfd1e8;
`

const StyledTitleBar = styled.header`
  display: flex;
  align-items: center;
  height: 15px;
  border-top: 1px solid #a5a5a5;
  background: #fff;
`

const StyledTitle = styled.h1`
  flex: 1;
  margin: 0;
  padding-left: 3px;
  font-size: 7px;
  font-weight: 400;
  color: #333;
`

const StyledWindowButton = styled.button`
  display: flex;
  align-items: center;
  justify-content: center;
  width: 27px;
  height: 13px;
`

const StyledMenuBar = styled.nav`
  display: flex;
  align-items: center;
  height: 13px;
  background: #d0d3ea;
  font-size: 7px;
  color: #3c3c50;
`

const StyledMenu = styled.button`
  height: 12px;
  padding: ${props => (props.$active ? '0 9px 0 2px' : '0 6px 0 5px')};
  margin-right: ${props => (props.$active ? '-3px' : '0')};
  background: ${props => (props.$active ? '#f8e5b5' : 'transparent')};
  line-height: 10px;
`

const StyledDocButtons = styled.div`
  display: flex;
  align-items: center;
  justify-content: space-around;
  width: 32px;
  height: 12px;
  margin-left: auto;
  background: #f6f6fb;
`

const StyledWorkspace = styled.main`
  display: flex;
  flex: 1;
  min-height: 0;
`

const StyledViewport = styled.section`
  position: relative;
  flex: 1;
  min-width: 0;
  overflow: hidden;
  border-top: 1px solid #2f315a;
  background: linear-gradient(#363969 0%, #3f4172 35%, #484979 66%, #73739b 82%, #aaaac4 100%);
`

const StyledScene = styled.svg`
  position: absolute;
  inset: 0;
  width: 100%;
  height: 100%;
`

const StyledTree = styled.div`
  position: relative;
  width: max-content;
  padding-top: 1px;
`

const StyledRoot = styled.div`
  display: flex;
  align-items: center;
  height: 16px;
`

const StyledBranch = styled.ul`
  margin: 0;
  padding: 1px 0 0 ${props => (props.$nested ? '12px' : '0')};
  list-style: none;
`

const StyledNode = styled.li`
  display: flex;
  align-items: center;
  height: 16px;
`

const StyledNodeLabel = styled.button`
  height: 13px;
  padding: 0 1px;
  line-height: 12px;
  white-space: nowrap;
  color: ${props => (props.$selected ? '#fbb95f' : '#dcdeed')};
  background: ${props => (props.$selected ? '#f4871b' : 'transparent')};
`

const StyledSideBar = styled.aside`
  display: flex;
  flex-direction: column;
  align-items: flex-end;
  width: 21px;
  overflow: hidden;
  border-left: 3px solid #f4f4fd;
  background: linear-gradient(90deg, #dfe0f4, #c6c8e2);
`

const StyledSideGrip = styled.span`
  display: flex;
  flex: none;
  align-items: center;
  width: 17px;
  height: ${props => props.$space}px;

  &::before {
    content: '';
    width: 10px;
    height: 2px;
    border-top: 1px solid #fff;
    border-bottom: 1px solid #b4b6cf;
  }
`

const StyledTool = styled.button`
  position: relative;
  display: flex;
  flex: none;
  align-items: center;
  justify-content: center;
  width: 17px;
  height: 17px;

  svg {
    width: 13px;
    height: 13px;
  }

  &::after {
    content: '';
    display: ${props => (props.$more ? 'block' : 'none')};
    position: absolute;
    right: 0;
    bottom: 0;
    border: 2px solid transparent;
    border-top: 3px solid #22222c;
    border-bottom: 0;
  }
`

const StyledToolBar = styled.div`
  display: flex;
  align-items: center;
  height: 23px;
  border-top: 3px solid #f8f8fe;
  border-bottom: 2px solid #9d9db6;
  background: linear-gradient(#e2e3f4, #c2c4de);
`

const StyledGrip = styled.span`
  display: flex;
  flex: none;
  justify-content: center;
  width: ${props => (props.$narrow ? '9px' : '12px')};

  &::before {
    content: '';
    width: 2px;
    height: 10px;
    border-left: 1px solid #fff;
    border-right: 1px solid #b4b6cf;
  }
`

const StyledSelectBox = styled.label`
  display: flex;
  align-items: center;
  width: 104px;
  height: 15px;
  margin-right: 3px;
  padding: 0 3px;
  border: 1px solid #c5c7d8;
  background: #fff;
  font-size: 7px;
  color: #444;

  select {
    flex: 1;
    appearance: none;
    outline: 0;
  }
`

const StyledLogo = styled.svg`
  margin-left: auto;
  font-family: 'Liberation Sans', sans-serif;
  font-size: 6px;
  font-style: italic;
  font-weight: 700;
  fill: #35468c;
`

const StyledStatusBar = styled.footer`
  display: flex;
  gap: 2px;
  height: 12px;
  padding-top: 1px;
  background: #cfd1e8;
  font-size: 7px;
  color: #6a6b82;
`

const StyledStatusText = styled.span`
  flex: 1;
  line-height: 12px;
`

const StyledCommand = styled.input`
  width: 183px;
  background: #fff;
`

const StyledStatusButton = styled.button`
  display: flex;
  align-items: center;
  justify-content: center;
  width: 17px;
  border: 1px solid #ededf6;
`
